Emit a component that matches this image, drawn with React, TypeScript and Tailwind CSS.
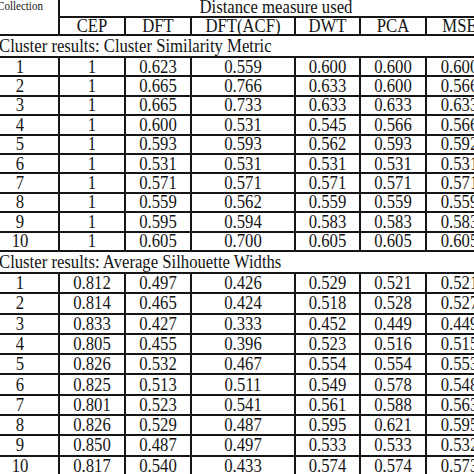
const similarity: string[][] = [
  ['1', '1', '0.623', '0.559', '0.600', '0.600', '0.600'],
  ['2', '1', '0.665', '0.766', '0.633', '0.600', '0.566'],
  ['3', '1', '0.665', '0.733', '0.633', '0.633', '0.633'],
  ['4', '1', '0.600', '0.531', '0.545', '0.566', '0.566'],
  ['5', '1', '0.593', '0.593', '0.562', '0.593', '0.592'],
  ['6', '1', '0.531', '0.531', '0.531', '0.531', '0.531'],
  ['7', '1', '0.571', '0.571', '0.571', '0.571', '0.571'],
  ['8', '1', '0.559', '0.562', '0.559', '0.559', '0.559'],
  ['9', '1', '0.595', '0.594', '0.583', '0.583', '0.583'],
  ['10', '1', '0.605', '0.700', '0.605', '0.605', '0.605'],
];

const silhouette: string[][] = [
  ['1', '0.812', '0.497', '0.426', '0.529', '0.521', '0.521'],
  ['2', '0.814', '0.465', '0.424', '0.518', '0.528', '0.527'],
  ['3', '0.833', '0.427', '0.333', '0.452', '0.449', '0.449'],
  ['4', '0.805', '0.455', '0.396', '0.523', '0.516', '0.515'],
  ['5', '0.826', '0.532', '0.467', '0.554', '0.554', '0.553'],
  ['6', '0.825', '0.513', '0.511', '0.549', '0.578', '0.548'],
  ['7', '0.801', '0.523', '0.541', '0.561', '0.588', '0.563'],
  ['8', '0.826', '0.529', '0.487', '0.595', '0.621', '0.595'],
  ['9', '0.850', '0.487', '0.497', '0.533', '0.533', '0.532'],
  ['10', '0.817', '0.540', '0.433', '0.574', '0.574', '0.573'],
];

const measures = ['CEP', 'DFT', 'DFT(ACF)', 'DWT', 'PCA', 'MSE'];

// text in the scan is a little taller than it is wide
function Txt({ children }: { children: React.ReactNode }) {
  return <span className="inline-block scale-y-[1.14] leading-[14px]">{children}</span>;
}

function Cell({ children }: { children: React.ReactNode }) {
  return (
    <div className="bg-white flex items-center justify-center whitespace-nowrap">
      <Txt>{children}</Txt>
    </div>
  );
}

function SectionRow({ label }: { label: string }) {
  return (
    <div className="col-span-7 bg-white flex items-center pl-[17px] whitespace-nowrap">
      <Txt>{label}</Txt>
    </div>
  );
}

export default function App() {
  return (
    <div className="w-[474px] h-[474px] overflow-hidden bg-white">
      <div
        className="grid gap-[2px] bg-[#161616] text-[#141414] text-[16.7px] w-[512px] -ml-[18px] -mt-[2px]"
        style={{
          fontFamily: '"Liberation Serif", "Times New Roman", serif',
          gridTemplateColumns: '76px 64px 64px 102px 63px 64px 65px',
          gridTemplateRows: `18px 16px 20px repeat(10, 17.4px) 20px repeat(10, 18.3px)`,
        }}
      >
        <div className="row-span-2 bg-white flex justify-center pt-[2px] text-[11px] leading-[14px]">
          <span className="inline-block scale-y-[1.1]">Collection</span>
        </div>
        <div className="col-span-6 bg-white flex items-center justify-center">
          <Txt>Distance measure used</Txt>
        </div>
        {measures.map((m) => (
          <Cell key={m}>{m}</Cell>
        ))}

        <SectionRow label="Cluster results: Cluster Similarity Metric" />
        {similarity.map((row) =>
          row.map((v, i) => <Cell key={`s-${row[0]}-${i}`}>{v}</Cell>),
        )}

        <SectionRow label="Cluster results: Average Silhouette Widths" />
        {silhouette.map((row) =>
          row.map((v, i) => <Cell key={`a-${row[0]}-${i}`}>{v}</Cell>),
        )}
      </div>
    </div>
  );
}
